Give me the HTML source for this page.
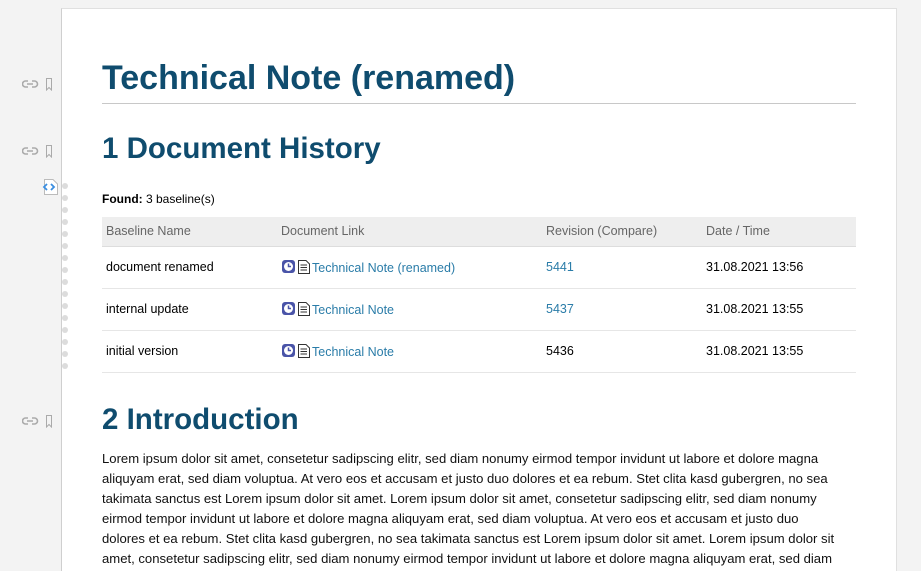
<!DOCTYPE html>
<html><head><meta charset="utf-8"><style>
*{margin:0;padding:0;box-sizing:border-box}
html,body{width:921px;height:571px;overflow:hidden}
body{background:#f3f3f3;font-family:"Liberation Sans",sans-serif;position:relative}
.page{position:absolute;left:61px;top:8px;width:836px;height:563px;background:#fff;border-left:1px solid #cfcfcf;border-top:1px solid #e0e0e0;border-right:1px solid #e0e0e0}
.abs{position:absolute}
h1{position:absolute;left:102px;top:59px;font-size:34px;font-weight:bold;color:#0f4c6e;white-space:nowrap}
.rule{position:absolute;left:102px;top:103px;width:754px;height:1px;background:#c8c8c8}
h2{position:absolute;left:102px;font-size:29.5px;font-weight:bold;color:#0f4c6e;white-space:nowrap}
.found{position:absolute;left:102px;top:192px;font-size:12px;color:#000}
table{position:absolute;left:102px;top:217px;width:754px;border-collapse:collapse;font-size:12.5px}
th{background:#eeeeee;color:#666;font-weight:normal;text-align:left;height:29px;padding:0 4px;vertical-align:middle;border-bottom:1px solid #ddd}
td{height:42px;padding:0 4px;border-bottom:1px solid #e6e6e6;color:#000}
a{color:#2a7ca8;text-decoration:none}
.ico{display:inline-block;vertical-align:-2px}
.p{position:absolute;left:102px;top:449px;font-size:13.1px;line-height:20px;color:#111;white-space:nowrap}
.gi{position:absolute;left:22px}
.dot{position:absolute;left:62px;width:6px;height:6px;border-radius:50%;background:#dcdcdc}
</style></head><body>
<div class="page"></div>
<h1>Technical Note (renamed)</h1>
<div class="rule"></div>
<h2 style="top:132px">1 Document History</h2>
<div class="found"><b>Found:</b> 3 baseline(s)</div>
<table>
<tr><th style="width:175px">Baseline Name</th><th style="width:265px">Document Link</th><th style="width:160px">Revision (Compare)</th><th>Date / Time</th></tr>
<tr><td>document renamed</td><td><svg class="ico" width="31" height="15"><rect x="1" y="1" width="13" height="13" rx="3" fill="#4a54a8"/><circle cx="7.5" cy="7.5" r="4.5" fill="#fff"/><path d="M7.5 4.5V7.5H10" stroke="#4a54a8" stroke-width="1.5" fill="none"/><path d="M17.5 1.5H25L28.5 5V14.5H17.5Z" fill="#fff" stroke="#333"/><path d="M19.5 6H26M19.5 8.5H26M19.5 11H26" stroke="#333"/></svg><a>Technical Note (renamed)</a></td><td><a>5441</a></td><td>31.08.2021 13:56</td></tr>
<tr><td>internal update</td><td><svg class="ico" width="31" height="15"><rect x="1" y="1" width="13" height="13" rx="3" fill="#4a54a8"/><circle cx="7.5" cy="7.5" r="4.5" fill="#fff"/><path d="M7.5 4.5V7.5H10" stroke="#4a54a8" stroke-width="1.5" fill="none"/><path d="M17.5 1.5H25L28.5 5V14.5H17.5Z" fill="#fff" stroke="#333"/><path d="M19.5 6H26M19.5 8.5H26M19.5 11H26" stroke="#333"/></svg><a>Technical Note</a></td><td><a>5437</a></td><td>31.08.2021 13:55</td></tr>
<tr><td>initial version</td><td><svg class="ico" width="31" height="15"><rect x="1" y="1" width="13" height="13" rx="3" fill="#4a54a8"/><circle cx="7.5" cy="7.5" r="4.5" fill="#fff"/><path d="M7.5 4.5V7.5H10" stroke="#4a54a8" stroke-width="1.5" fill="none"/><path d="M17.5 1.5H25L28.5 5V14.5H17.5Z" fill="#fff" stroke="#333"/><path d="M19.5 6H26M19.5 8.5H26M19.5 11H26" stroke="#333"/></svg><a>Technical Note</a></td><td>5436</td><td>31.08.2021 13:55</td></tr>
</table>
<h2 style="top:403px">2 Introduction</h2>
<div class="p">Lorem ipsum dolor sit amet, consetetur sadipscing elitr, sed diam nonumy eirmod tempor invidunt ut labore et dolore magna<br>aliquyam erat, sed diam voluptua. At vero eos et accusam et justo duo dolores et ea rebum. Stet clita kasd gubergren, no sea<br>takimata sanctus est Lorem ipsum dolor sit amet. Lorem ipsum dolor sit amet, consetetur sadipscing elitr, sed diam nonumy<br>eirmod tempor invidunt ut labore et dolore magna aliquyam erat, sed diam voluptua. At vero eos et accusam et justo duo<br>dolores et ea rebum. Stet clita kasd gubergren, no sea takimata sanctus est Lorem ipsum dolor sit amet. Lorem ipsum dolor sit<br>amet, consetetur sadipscing elitr, sed diam nonumy eirmod tempor invidunt ut labore et dolore magna aliquyam erat, sed diam</div>
<svg class="gi" style="top:77px" width="34" height="14"><path d="M6 4H3.5A3 3 0 0 0 3.5 10H6M10 4H12.5A3 3 0 0 1 12.5 10H10M5 7H11" stroke="#aaa" stroke-width="1.6" fill="none"/><path d="M24.5 1.5H29.5V13L27 10.5L24.5 13Z" stroke="#aaa" fill="none"/></svg>
<svg class="gi" style="top:144px" width="34" height="14"><path d="M6 4H3.5A3 3 0 0 0 3.5 10H6M10 4H12.5A3 3 0 0 1 12.5 10H10M5 7H11" stroke="#aaa" stroke-width="1.6" fill="none"/><path d="M24.5 1.5H29.5V13L27 10.5L24.5 13Z" stroke="#aaa" fill="none"/></svg>
<svg class="gi" style="top:414px" width="34" height="14"><path d="M6 4H3.5A3 3 0 0 0 3.5 10H6M10 4H12.5A3 3 0 0 1 12.5 10H10M5 7H11" stroke="#aaa" stroke-width="1.6" fill="none"/><path d="M24.5 1.5H29.5V13L27 10.5L24.5 13Z" stroke="#aaa" fill="none"/></svg>
<svg class="abs" style="left:41px;top:179px" width="18" height="16"><path d="M3.5 0.5H12L16.5 5V15.5H3.5Z" fill="#fff" stroke="#bbb"/><path d="M6 5L3 8L6 11M10 5L13 8L10 11" stroke="#3a8de0" stroke-width="1.8" fill="none"/></svg>
<div class="dot" style="top:183px"></div><div class="dot" style="top:195px"></div><div class="dot" style="top:207px"></div><div class="dot" style="top:219px"></div><div class="dot" style="top:231px"></div><div class="dot" style="top:243px"></div><div class="dot" style="top:255px"></div><div class="dot" style="top:267px"></div><div class="dot" style="top:279px"></div><div class="dot" style="top:291px"></div><div class="dot" style="top:303px"></div><div class="dot" style="top:315px"></div><div class="dot" style="top:327px"></div><div class="dot" style="top:339px"></div><div class="dot" style="top:351px"></div><div class="dot" style="top:363px"></div>
</body></html>
